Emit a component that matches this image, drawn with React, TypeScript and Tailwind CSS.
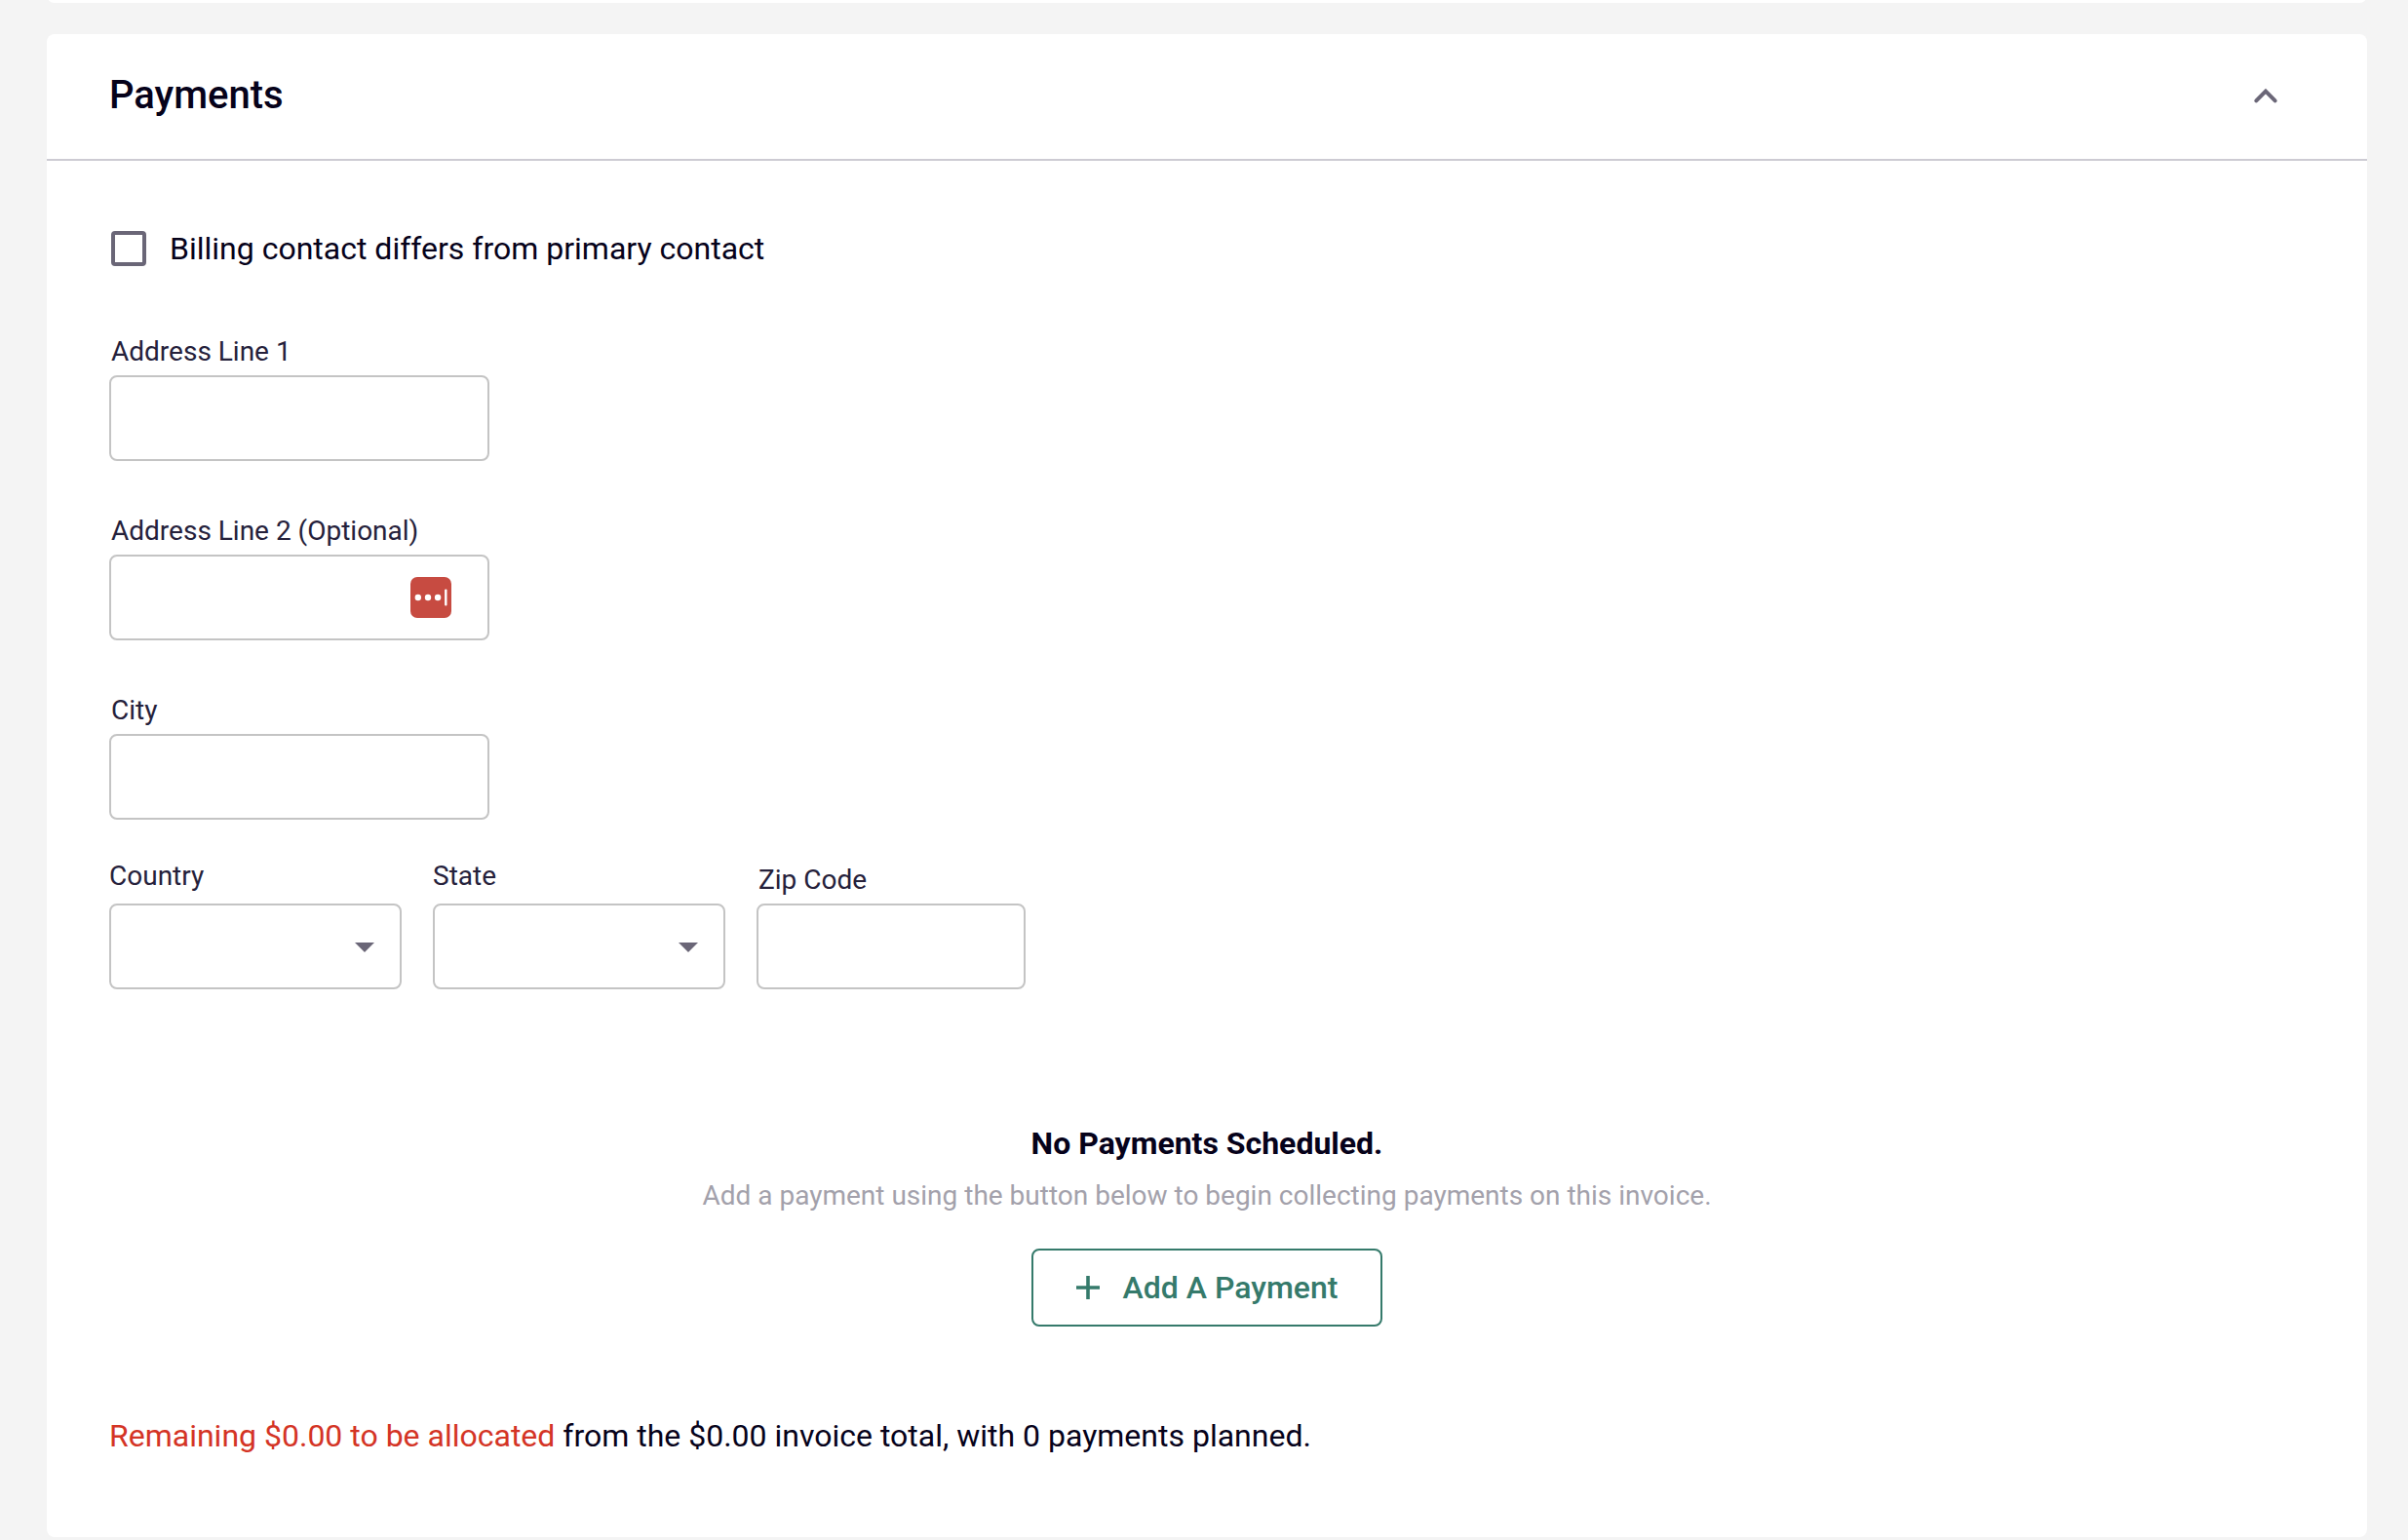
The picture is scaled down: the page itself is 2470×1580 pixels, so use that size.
import { useState } from 'react';

const fieldClasses =
  'h-[88px] w-full rounded-lg border-2 border-[#c4c4c4] bg-white px-6 text-[28px] text-[#06021a] outline-none focus:border-[#357a6b]';

type FieldProps = {
  id: string;
  label: string;
  children?: React.ReactNode;
};

function TextField({ id, label, children }: FieldProps) {
  const [value, setValue] = useState('');

  return (
    <div className="flex flex-col gap-2">
      <label htmlFor={id} className="px-0.5 text-[28px] leading-8 text-[#25213b]">
        {label}
      </label>
      <div className="relative">
        <input
          id={id}
          type="text"
          value={value}
          onChange={(e) => setValue(e.target.value)}
          className={fieldClasses}
        />
        {children}
      </div>
    </div>
  );
}

function SelectField({ id, label }: FieldProps) {
  const [value, setValue] = useState('');

  return (
    <div className="flex w-[300px] flex-col gap-3">
      <label htmlFor={id} className="text-[28px] leading-8 text-[#25213b]">
        {label}
      </label>
      <div className="relative">
        <select
          id={id}
          value={value}
          onChange={(e) => setValue(e.target.value)}
          className={`${fieldClasses} appearance-none`}
        >
          <option value=""></option>
        </select>
        <svg
          className="pointer-events-none absolute inset-y-0 right-3.5 my-auto h-12 w-12"
          viewBox="0 0 24 24"
          fill="#6a6677"
        >
          <path d="M7 10l5 5 5-5z" />
        </svg>
      </div>
    </div>
  );
}

// Password manager badge shown inside the field
function AutofillBadge() {
  return (
    <button
      type="button"
      aria-label="Autofill"
      className="absolute inset-y-0 right-[39px] my-auto h-[42px] w-[42px]"
    >
      <svg viewBox="0 0 42 42" className="h-full w-full">
        <rect width="42" height="42" rx="7" fill="#c74b41" />
        <circle cx="7.8" cy="21" r="3.2" fill="#fff" />
        <circle cx="18" cy="21" r="3.2" fill="#fff" />
        <circle cx="28.1" cy="21" r="3.2" fill="#fff" />
        <rect x="35.1" y="12.5" width="2.4" height="17" rx="1" fill="#fff" />
      </svg>
    </button>
  );
}

export default function App() {
  const [open, setOpen] = useState(true);
  const [billingDiffers, setBillingDiffers] = useState(false);

  return (
    <div className="flex min-h-screen flex-col gap-8 bg-[#f4f4f4] pr-[42px] pl-12 font-['Roboto',sans-serif] text-[#06021a]">
      {/* End of the previous section */}
      <div className="-mt-5 h-[23px] rounded-b-lg bg-white" />

      <section className="rounded-lg bg-white">
        <header className="flex h-[130px] items-center justify-between border-b-2 border-[#cdcbd3] pr-20 pl-16">
          <h2 className="pb-0.5 text-[40px] leading-[48px] font-medium">Payments</h2>
          <button
            type="button"
            aria-label="Toggle payments"
            aria-expanded={open}
            onClick={() => setOpen(!open)}
          >
            <svg
              viewBox="0 0 48 48"
              className={open ? 'h-12 w-12' : 'h-12 w-12 rotate-180'}
              fill="none"
              stroke="#6a6677"
              strokeWidth="4"
              strokeLinecap="round"
            >
              <path d="M14.3 28.3L24 18.6l9.7 9.7" />
            </svg>
          </button>
        </header>

        {open && (
          <div className="px-16 pt-[66px] pb-20">
            <label className="flex w-fit items-center gap-6 pl-0.5 text-[32px] leading-[48px]">
              <input
                type="checkbox"
                checked={billingDiffers}
                onChange={(e) => setBillingDiffers(e.target.checked)}
                className="h-9 w-9 appearance-none rounded border-4 border-[#6a6677] checked:bg-[#6a6677]"
              />
              Billing contact differs from primary contact
            </label>

            <div className="mt-[66px] flex w-[390px] flex-col gap-14">
              <TextField id="address1" label="Address Line 1" />
              <TextField id="address2" label="Address Line 2 (Optional)">
                <AutofillBadge />
              </TextField>
              <TextField id="city" label="City" />
            </div>

            <div className="mt-[42px] flex items-end gap-8">
              <SelectField id="country" label="Country" />
              <SelectField id="state" label="State" />
              <div className="w-[276px]">
                <TextField id="zip" label="Zip Code" />
              </div>
            </div>

            <div className="mt-[138px] flex flex-col items-center text-center">
              <h3 className="text-[32px] leading-10 font-bold">No Payments Scheduled.</h3>
              <p className="mt-4 text-[28px] leading-9 text-[#a3a1ab]">
                Add a payment using the button below to begin collecting payments on this invoice.
              </p>
              <button
                type="button"
                className="mt-9 flex h-20 items-center gap-6 rounded-lg border-2 border-[#357a6b] px-11 text-[32px] leading-10 font-medium text-[#357a6b] hover:bg-[#357a6b]/5"
              >
                <svg viewBox="0 0 24 24" className="h-6 w-6" fill="currentColor">
                  <path d="M10.2 0h3.6v10.2H24v3.6H13.8V24h-3.6V13.8H0v-3.6h10.2z" />
                </svg>
                Add A Payment
              </button>
            </div>

            <p className="mt-[88px] text-[32px] leading-[48px]">
              <span className="text-[#d43425]">Remaining $0.00 to be allocated</span> from the $0.00
              invoice total, with 0 payments planned.
            </p>
          </div>
        )}
      </section>
    </div>
  );
}
